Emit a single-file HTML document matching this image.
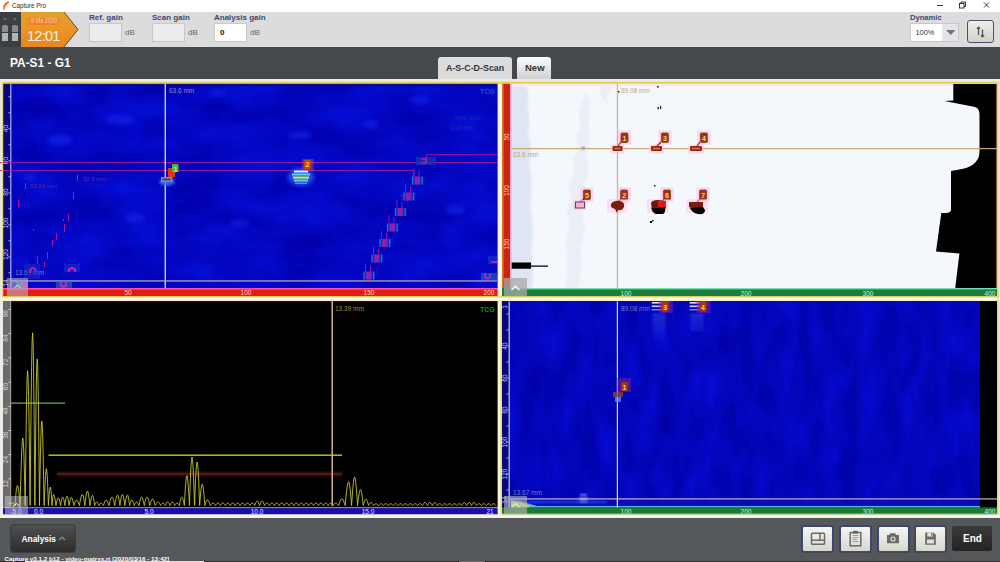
<!DOCTYPE html><html><head><meta charset="utf-8"><style>
*{margin:0;padding:0;box-sizing:border-box}
html,body{width:1000px;height:562px;overflow:hidden;background:#54585a;font-family:"Liberation Sans",sans-serif}
.a{position:absolute}
.lbl{font-size:8px;font-weight:bold;color:#3d4670;white-space:nowrap;line-height:10px}
.inp{background:#ececec;border:1px solid #c8c8c8}
.db{font-size:8px;color:#666;line-height:10px}
.bb{border:1.8px solid #3e4676;border-radius:2px;background:linear-gradient(#f6f6f2,#d6d8cc);box-shadow:0 0 0 1px rgba(40,40,60,.35)}
svg text{font-family:"Liberation Sans",sans-serif}
</style></head><body>
<div class="a" style="left:0;top:0;width:1000px;height:12px;background:#fff"></div>
<svg class="a" style="left:2px;top:1px" width="8" height="10" viewBox="0 0 8 10"><path d="M6.8 0.3 C3 1.2 0.8 4 1.2 8.6 L2.3 9.2 C2.6 6 4 3.6 7.4 1.6 Z" fill="#e8692a"/><path d="M2.2 8 C4 7 5.8 4.2 6.8 1.2" stroke="#f7b080" stroke-width="0.7" fill="none"/></svg>
<div class="a" style="left:12px;top:2px;font-size:6.3px;color:#2a2a2a;line-height:8px;white-space:nowrap">Capture Pro</div>
<svg class="a" style="left:930px;top:0" width="70" height="12" viewBox="0 0 70 12"><path d="M7 5.5 H13" stroke="#222" stroke-width="0.9"/><rect x="29.5" y="3.5" width="4.5" height="4.5" fill="none" stroke="#222" stroke-width="0.9"/><path d="M31 3.5 V2 H35.5 V6.5 H34" fill="none" stroke="#222" stroke-width="0.9"/><path d="M54 2.5 L59 7.5 M59 2.5 L54 7.5" stroke="#222" stroke-width="0.9"/></svg>
<div class="a" style="left:0;top:12px;width:1000px;height:35px;background:#dcdcdc"></div>
<div class="a" style="left:0;top:12px;width:21px;height:35px;background:#3c3f41"></div>
<div class="a" style="left:2px;top:25px;width:6px;height:16px;background:linear-gradient(#8c8c8c 0,#8c8c8c 44%,#3c3f41 44%,#3c3f41 50%,#b4b4b4 50%);border-radius:2px 2px 0 0"></div>
<div class="a" style="left:12px;top:25px;width:6px;height:16px;background:linear-gradient(#8c8c8c 0,#8c8c8c 44%,#3c3f41 44%,#3c3f41 50%,#b4b4b4 50%);border-radius:2px 2px 0 0"></div>
<svg class="a" style="left:0;top:12px" width="22" height="12"><path d="M3 6 L7 6 L5 9 Z M13 6 L17 6 L15 9 Z" fill="#6a6a6a"/></svg>
<svg class="a" style="left:21px;top:12px" width="58" height="35" viewBox="0 0 58 35"><defs><linearGradient id="og" x1="0" y1="0" x2="0" y2="1"><stop offset="0" stop-color="#dca22c"/><stop offset="0.3" stop-color="#ec9a28"/><stop offset="1" stop-color="#e8861e"/></linearGradient></defs><path d="M0 0 H43 L57 17.5 L43 35 H0 Z" fill="url(#og)"/><path d="M43 0 L57 17.5 L43 35" fill="none" stroke="#6a4a20" stroke-width="1"/></svg>
<div class="a" style="left:24px;top:17.5px;width:38px;height:7px;background:linear-gradient(90deg,rgba(240,110,40,0) 0,rgba(240,110,40,.55) 20%,rgba(240,110,40,.55) 80%,rgba(240,110,40,0) 100%)"></div>
<div class="a" style="left:30.5px;top:17px;font-size:6.6px;color:#ffd0a0;line-height:8px;white-space:nowrap;transform:scaleX(0.84);transform-origin:0 0">8 Ma 2020</div>
<div class="a" style="left:27px;top:28px;font-size:14.5px;color:#fff4e4;line-height:16px;white-space:nowrap;letter-spacing:-0.75px">12:01</div>
<div class="a lbl" style="left:89px;top:13px">Ref. gain</div>
<div class="a inp" style="left:89px;top:23px;width:33px;height:19px;background:#ececec"></div>
<div class="a db" style="left:125px;top:28px">dB</div>
<div class="a lbl" style="left:152px;top:13px">Scan gain</div>
<div class="a inp" style="left:152px;top:23px;width:33px;height:19px;background:#ececec"></div>
<div class="a db" style="left:188px;top:28px">dB</div>
<div class="a lbl" style="left:214px;top:13px">Analysis gain</div>
<div class="a inp" style="left:214px;top:23px;width:33px;height:19px;background:#fff"></div>
<div class="a db" style="left:250px;top:28px">dB</div>
<div class="a" style="left:220px;top:28px;font-size:8px;font-weight:bold;color:#111;line-height:10px">0</div>
<div class="a lbl" style="left:910px;top:13px;font-size:7.6px">Dynamic</div>
<div class="a inp" style="left:910px;top:23px;width:49px;height:19px;background:linear-gradient(90deg,#fff 0,#fff 67%,#e2e4e8 67%)"></div>
<div class="a" style="left:915.5px;top:28px;font-size:7.4px;color:#333;line-height:10px">100%</div>
<svg class="a" style="left:946px;top:30px" width="10" height="6"><path d="M0 0 H9.5 L4.75 5 Z" fill="#70757f"/></svg>
<div class="a" style="left:967px;top:20px;width:27px;height:23px;background:linear-gradient(#f0efec,#d2cfc8);border:1.6px solid #4a5070;border-radius:3px"></div>
<svg class="a" style="left:974px;top:24px" width="14" height="16" viewBox="0 0 14 16"><path d="M4.5 11 V3" stroke="#555" stroke-width="1.3" fill="none"/><path d="M2.3 5 L4.5 2 L6.7 5 Z" fill="#555"/><path d="M8.5 5.5 V13" stroke="#555" stroke-width="1.3" fill="none"/><path d="M6.3 11 L8.5 14 L10.7 11 Z" fill="#555"/></svg>
<div class="a" style="left:0;top:47px;width:1000px;height:32px;background:#46494b"></div>
<div class="a" style="left:10px;top:56.2px;font-size:11.9px;font-weight:bold;color:#fff;line-height:14px;white-space:nowrap">PA-S1 - G1</div>
<div class="a" style="left:438px;top:57px;width:74px;height:23px;background:#dcdcdc;border-radius:3px 3px 0 0"></div>
<div class="a" style="left:446px;top:63px;font-size:8.9px;font-weight:bold;color:#333;line-height:10px;white-space:nowrap">A-S-C-D-Scan</div>
<div class="a" style="left:517px;top:57px;width:34px;height:22px;background:linear-gradient(#fcfcfc,#d0d0d0);border-radius:3px 3px 0 0"></div>
<div class="a" style="left:525px;top:63px;font-size:9.5px;font-weight:bold;color:#333;line-height:10px;white-space:nowrap">New</div>
<div class="a" style="left:0;top:79px;width:1000px;height:3px;background:#ece8ea"></div>
<svg class="a" style="left:0;top:0" width="1000" height="562" viewBox="0 0 1000 562"><defs>
<filter id="nzB" x="0" y="0" width="100%" height="100%" color-interpolation-filters="sRGB"><feTurbulence type="fractalNoise" baseFrequency="0.018 0.04" numOctaves="3" seed="4"/><feColorMatrix values="0.03 0 0 0 -0.005  0.09 0 0 0 -0.02  0.24 0 0 0 0.635  0 0 0 0 1"/></filter>
<filter id="nzD" x="0" y="0" width="100%" height="100%" color-interpolation-filters="sRGB"><feTurbulence type="fractalNoise" baseFrequency="0.05 0.022" numOctaves="3" seed="9"/><feColorMatrix values="0.04 0 0 0 -0.01  0.06 0 0 0 -0.01  0.26 0 0 0 0.6  0 0 0 0 1"/></filter>
<filter id="bl05"><feGaussianBlur stdDeviation="0.6"/></filter>
<filter id="bl1"><feGaussianBlur stdDeviation="1"/></filter>
<filter id="bl2"><feGaussianBlur stdDeviation="2"/></filter>
</defs><rect x="0" y="82" width="1000" height="436" fill="#e6e4e2"/><rect x="2" y="82" width="997" height="436" fill="#f2ecc0"/><rect x="3" y="83.5" width="495" height="213" fill="#000ab8"/><rect x="11" y="84" width="486" height="204" filter="url(#nzB)"/><g filter="url(#bl2)" fill="#1828f0" opacity="0.55"><ellipse cx="217" cy="93" rx="9" ry="3"/><ellipse cx="370" cy="124" rx="8" ry="4"/><ellipse cx="30" cy="178" rx="6" ry="4"/><ellipse cx="135" cy="218" rx="10" ry="5"/><ellipse cx="240" cy="223" rx="10" ry="4"/><ellipse cx="120" cy="120" rx="14" ry="5"/><ellipse cx="300" cy="135" rx="12" ry="4"/><ellipse cx="455" cy="210" rx="10" ry="5"/><ellipse cx="60" cy="140" rx="12" ry="5"/><ellipse cx="420" cy="100" rx="10" ry="4"/></g><rect x="11" y="84" width="486" height="2.5" fill="#080890" opacity="0.8"/><rect x="3.5" y="84" width="7" height="204" fill="#08087a"/><rect x="10" y="84" width="1.5" height="204" fill="#8a8cf0"/><rect x="8.5" y="96.3" width="2" height="1" fill="#b0b4ff"/><rect x="8.5" y="112.3" width="2" height="1" fill="#b0b4ff"/><rect x="8.5" y="128.3" width="2" height="1" fill="#b0b4ff"/><rect x="8.5" y="144.3" width="2" height="1" fill="#b0b4ff"/><rect x="8.5" y="160.3" width="2" height="1" fill="#b0b4ff"/><rect x="8.5" y="176.3" width="2" height="1" fill="#b0b4ff"/><rect x="8.5" y="192.3" width="2" height="1" fill="#b0b4ff"/><rect x="8.5" y="208.3" width="2" height="1" fill="#b0b4ff"/><rect x="8.5" y="224.3" width="2" height="1" fill="#b0b4ff"/><rect x="8.5" y="240.3" width="2" height="1" fill="#b0b4ff"/><rect x="8.5" y="256.3" width="2" height="1" fill="#b0b4ff"/><rect x="8.5" y="272.3" width="2" height="1" fill="#b0b4ff"/><text x="8.3" y="128.6" font-size="6.5" fill="#c8c8f8" transform="rotate(-90 8.3 128.6)" text-anchor="middle">40</text><text x="8.3" y="160.5" font-size="6.5" fill="#c8c8f8" transform="rotate(-90 8.3 160.5)" text-anchor="middle">60</text><text x="8.3" y="192" font-size="6.5" fill="#c8c8f8" transform="rotate(-90 8.3 192)" text-anchor="middle">80</text><text x="8.3" y="223" font-size="6.5" fill="#c8c8f8" transform="rotate(-90 8.3 223)" text-anchor="middle">100</text><text x="8.3" y="254.5" font-size="6.5" fill="#c8c8f8" transform="rotate(-90 8.3 254.5)" text-anchor="middle">120</text><text x="8.3" y="283" font-size="6.5" fill="#c8c8f8" transform="rotate(-90 8.3 283)" text-anchor="middle">14</text><path d="M0 162.6 H497 M426.5 162.6 V154.7 H497 M0 170.6 H413.7 V178" stroke="#b41c94" stroke-width="0.9" fill="none"/><rect x="164.6" y="84" width="1.3" height="204" fill="#e4dcd0"/><rect x="11" y="280.3" width="486" height="1.3" fill="#a8a4c4"/><text x="169" y="92.5" font-size="6.5" fill="#8c8cc8" >63.6 mm</text><text x="15" y="275" font-size="6.5" fill="#8080b8" >13.67 mm</text><text x="480" y="93.5" font-size="7" fill="#2a4ea8" font-weight="bold">TCG</text><text x="83" y="181" font-size="6" fill="#6a20a8" >52.5 mm</text><text x="30" y="188" font-size="6" fill="#6a20a8" >53.04 mm</text><rect x="25" y="183" width="1" height="6" fill="#b01890"/><rect x="18" y="200" width="1" height="7" fill="#b01890"/><rect x="77" y="174" width="1" height="7" fill="#b01890"/><rect x="73" y="192" width="1" height="7" fill="#b01890"/><rect x="68" y="214" width="1" height="7" fill="#b01890"/><rect x="64" y="224" width="1" height="8" fill="#b01890"/><rect x="56" y="233" width="1" height="7" fill="#b01890"/><rect x="52" y="240" width="1" height="6" fill="#b01890"/><rect x="47" y="252" width="1" height="7" fill="#b01890"/><rect x="44" y="262" width="1" height="5" fill="#b01890"/><rect x="33" y="229" width="1" height="2" fill="#b01890"/><rect x="63" y="219" width="1" height="2" fill="#b01890"/><rect x="24" y="264" width="16" height="15" fill="#1838c0" opacity="0.45"/><rect x="64" y="264" width="16" height="8" fill="#1838c0" opacity="0.55"/><path d="M30.5 273 V269.5 Q33 266.5 35.5 269.5 V271" stroke="#e818b8" stroke-width="1.5" fill="none"/><path d="M69 272 V269.5 Q72 266.5 75 269.5 V272" stroke="#e818b8" stroke-width="1.8" fill="none"/><rect x="37" y="256" width="0.9" height="8" fill="#b01890"/><rect x="16" y="281.5" width="12" height="6.5" fill="#20a0a0" opacity="0.6"/><rect x="56" y="281.5" width="16" height="6.5" fill="#2090b0" opacity="0.5"/><path d="M22 282 V285.5 Q24 288 26.5 285.5 V282" stroke="#f020c0" stroke-width="1.8" fill="none"/><path d="M61 282 V285.5 Q63.5 288 66 285.5 V282" stroke="#d020c0" stroke-width="1.8" fill="none"/><rect x="411.5" y="176.5" width="12" height="8" fill="#1838c8" opacity="0.6"/><rect x="412.0" y="176.5" width="1.2" height="8" fill="#1890b0" opacity="0.8"/><rect x="421.5" y="176.5" width="1.2" height="8" fill="#1890b0" opacity="0.8"/><rect x="414.5" y="176.5" width="5.5" height="8" fill="#8a20b0"/><rect x="413.5" y="168.5" width="0.9" height="8" fill="#a01890"/><rect x="418.5" y="170.5" width="0.9" height="6" fill="#a01890"/><rect x="403" y="192.5" width="12" height="8" fill="#1838c8" opacity="0.6"/><rect x="403.5" y="192.5" width="1.2" height="8" fill="#1890b0" opacity="0.8"/><rect x="413" y="192.5" width="1.2" height="8" fill="#1890b0" opacity="0.8"/><rect x="406" y="192.5" width="5.5" height="8" fill="#8a20b0"/><rect x="405" y="184.5" width="0.9" height="8" fill="#a01890"/><rect x="410" y="186.5" width="0.9" height="6" fill="#a01890"/><rect x="394.5" y="208" width="12" height="8" fill="#1838c8" opacity="0.6"/><rect x="395.0" y="208" width="1.2" height="8" fill="#1890b0" opacity="0.8"/><rect x="404.5" y="208" width="1.2" height="8" fill="#1890b0" opacity="0.8"/><rect x="397.5" y="208" width="5.5" height="8" fill="#8a20b0"/><rect x="396.5" y="200" width="0.9" height="8" fill="#a01890"/><rect x="401.5" y="202" width="0.9" height="6" fill="#a01890"/><rect x="386.5" y="223.5" width="12" height="8" fill="#1838c8" opacity="0.6"/><rect x="387.0" y="223.5" width="1.2" height="8" fill="#1890b0" opacity="0.8"/><rect x="396.5" y="223.5" width="1.2" height="8" fill="#1890b0" opacity="0.8"/><rect x="389.5" y="223.5" width="5.5" height="8" fill="#8a20b0"/><rect x="388.5" y="215.5" width="0.9" height="8" fill="#a01890"/><rect x="393.5" y="217.5" width="0.9" height="6" fill="#a01890"/><rect x="379" y="239" width="12" height="8" fill="#1838c8" opacity="0.6"/><rect x="379.5" y="239" width="1.2" height="8" fill="#1890b0" opacity="0.8"/><rect x="389" y="239" width="1.2" height="8" fill="#1890b0" opacity="0.8"/><rect x="382" y="239" width="5.5" height="8" fill="#8a20b0"/><rect x="381" y="231" width="0.9" height="8" fill="#a01890"/><rect x="386" y="233" width="0.9" height="6" fill="#a01890"/><rect x="371" y="254.5" width="12" height="8" fill="#1838c8" opacity="0.6"/><rect x="371.5" y="254.5" width="1.2" height="8" fill="#1890b0" opacity="0.8"/><rect x="381" y="254.5" width="1.2" height="8" fill="#1890b0" opacity="0.8"/><rect x="374" y="254.5" width="5.5" height="8" fill="#8a20b0"/><rect x="373" y="246.5" width="0.9" height="8" fill="#a01890"/><rect x="378" y="248.5" width="0.9" height="6" fill="#a01890"/><rect x="363" y="271.5" width="12" height="8" fill="#1838c8" opacity="0.6"/><rect x="363.5" y="271.5" width="1.2" height="8" fill="#1890b0" opacity="0.8"/><rect x="373" y="271.5" width="1.2" height="8" fill="#1890b0" opacity="0.8"/><rect x="366" y="271.5" width="5.5" height="8" fill="#8a20b0"/><rect x="365" y="263.5" width="0.9" height="8" fill="#a01890"/><rect x="370" y="265.5" width="0.9" height="6" fill="#a01890"/><rect x="488" y="256" width="9" height="8" fill="#1838c8" opacity="0.6"/><path d="M491 262 H497" stroke="#e020b0" stroke-width="1.5"/><rect x="481" y="273" width="16" height="7" fill="#2090b0" opacity="0.45"/><path d="M485 273.5 V277 Q487.5 279.5 490 277 V273.5" stroke="#d020c0" stroke-width="1.6" fill="none"/><rect x="416" y="157" width="20" height="8" fill="#1838b0" opacity="0.7"/><path d="M421 159 h5 v4 h-5" stroke="#e02090" stroke-width="1.2" fill="none"/><text x="400" y="200" font-size="6.5" fill="#6a2090" >TCG</text><text x="455" y="120" font-size="6" fill="#1830b0" >NNA 50/2</text><text x="450" y="130" font-size="6" fill="#1830b0" >SCP 500 </text><g filter="url(#bl2)"><ellipse cx="301" cy="177" rx="13" ry="9" fill="#2a60ff" opacity="0.8"/></g><g filter="url(#bl05)"><rect x="294" y="170.5" width="14" height="2" fill="#d8e8ff"/><rect x="292" y="173.5" width="18" height="2" fill="#50d8ff"/><rect x="293" y="176.5" width="16" height="2.2" fill="#b8f040"/><rect x="294" y="179.5" width="14" height="2" fill="#70c0ff"/><rect x="295" y="182.5" width="12" height="1.5" fill="#3090ff"/></g><rect x="302" y="159" width="12" height="12" fill="#ff40c0" opacity="0.3"/><rect x="304" y="160" width="7" height="9" rx="1" fill="#d04010" stroke="#806010" stroke-width="0.6"/><text x="307.5" y="167" font-size="7" font-weight="bold" fill="#ffd040" text-anchor="middle">2</text><g filter="url(#bl1)"><ellipse cx="167" cy="182" rx="8" ry="4" fill="#3a70ff" opacity="0.8"/></g><g filter="url(#bl05)"><rect x="168" y="168" width="7" height="9" fill="#e03418"/><rect x="172" y="164" width="6.5" height="8" rx="1" fill="#48b840"/></g><text x="175.5" y="172" font-size="7" font-weight="bold" fill="#ffe040" text-anchor="middle">1</text><rect x="161" y="177" width="11.5" height="5" fill="#8a8a9a"/><rect x="162.5" y="178.5" width="8" height="2" fill="#404060"/><rect x="3" y="288" width="495" height="8" fill="#e41e0c"/><rect x="3" y="288" width="495" height="1.6" fill="#ff48b0"/><text x="128" y="295" font-size="6.5" fill="#ffd8c8" text-anchor="middle">50</text><text x="246" y="295" font-size="6.5" fill="#ffd8c8" text-anchor="middle">100</text><text x="369" y="295" font-size="6.5" fill="#ffd8c8" text-anchor="middle">150</text><text x="489" y="295" font-size="6.5" fill="#ffd8c8" text-anchor="middle">200</text><rect x="7" y="278" width="21" height="18" fill="#b8b0c0" opacity="0.6"/><path d="M14.5 288 L17.5 285 L20.5 288" stroke="#e0f0ff" stroke-width="1" fill="none"/><rect x="502" y="83.5" width="495" height="213" fill="#f4f7fc"/><g filter="url(#bl1)"><path d="M511 86 H526 Q530 96 527 108 Q531 120 528 132 Q533 150 529 165 Q534 185 530 205 Q535 230 531 250 Q534 270 532 288 H511 Z" fill="#dde6f2"/><path d="M586 92 Q582 104 578 112 Q584 124 576 136 Q582 150 572 160 Q578 172 568 186 Q574 198 566 210 Q572 226 566 244 Q570 262 566 288 H578 Q584 266 580 248 Q588 230 582 214 Q590 198 584 184 Q592 170 586 156 Q592 140 588 124 Q594 108 586 92 Z" fill="#eaeef5"/><path d="M600 86 H612 Q606 94 608 104 Q602 100 600 92 Z" fill="#eaeef5"/></g><rect x="511" y="83.5" width="486" height="2.8" fill="#fbe6f2"/><path d="M953.3 84 H996 V288 H955.2 L959.4 253.6 L936 251.4 L941.3 213 H947 Q951 212 951 209.9 V171 L962 169 Q979.5 165 979.5 151.4 V115 Q979.5 108 975 107 L944.5 101 L953.3 100.5 Z" fill="#000"/><rect x="995.5" y="84" width="1.2" height="204" fill="#401010"/><rect x="511" y="148" width="486" height="1.2" fill="#c8a870"/><rect x="616.8" y="84" width="1.3" height="204" fill="#d0b888"/><text x="621" y="92.5" font-size="6.5" fill="#c0a488" >89.08 mm</text><text x="513" y="157" font-size="6.5" fill="#c0a488" >63.6 mm</text><path d="M511.5 262.5 H531 V265.6 H548 V266.8 H531 V268.8 H511.5 Z" fill="#000"/><rect x="510" y="262.5" width="2" height="6.5" fill="#901010"/><rect x="618" y="91" width="1.5" height="1.5" fill="#202020"/><rect x="657" y="86" width="1.6" height="1.6" fill="#202020"/><rect x="657.5" y="107" width="1.4" height="2.2" fill="#202020"/><rect x="660" y="106" width="1.2" height="3" fill="#202020"/><rect x="652" y="220" width="1.5" height="1.5" fill="#202020"/><rect x="654" y="185" width="1.5" height="1.5" fill="#202020"/><rect x="581.5" y="146.5" width="3.5" height="3.5" fill="#a8b0c0"/><rect x="618" y="130.5" width="13" height="14" fill="#ffc4ec" opacity="0.75"/><rect x="621" y="133" width="7" height="9.5" rx="1.2" fill="#a83010" stroke="#5a4010" stroke-width="0.7"/><text x="624.5" y="140.5" font-size="7" font-weight="bold" fill="#f8d860" text-anchor="middle">1</text><rect x="658.4" y="130.5" width="13" height="14" fill="#ffc4ec" opacity="0.75"/><rect x="661.4" y="133" width="7" height="9.5" rx="1.2" fill="#a83010" stroke="#5a4010" stroke-width="0.7"/><text x="664.9" y="140.5" font-size="7" font-weight="bold" fill="#f8d860" text-anchor="middle">3</text><rect x="697.4" y="130.5" width="13" height="14" fill="#ffc4ec" opacity="0.75"/><rect x="700.4" y="133" width="7" height="9.5" rx="1.2" fill="#a83010" stroke="#5a4010" stroke-width="0.7"/><text x="703.9" y="140.5" font-size="7" font-weight="bold" fill="#f8d860" text-anchor="middle">4</text><rect x="580.4" y="187.5" width="13" height="14" fill="#ffc4ec" opacity="0.75"/><rect x="583.4" y="190" width="7" height="9.5" rx="1.2" fill="#a83010" stroke="#5a4010" stroke-width="0.7"/><text x="586.9" y="197.5" font-size="7" font-weight="bold" fill="#f8d860" text-anchor="middle">5</text><rect x="617.6" y="187.5" width="13" height="14" fill="#ffc4ec" opacity="0.75"/><rect x="620.6" y="190" width="7" height="9.5" rx="1.2" fill="#a83010" stroke="#5a4010" stroke-width="0.7"/><text x="624.1" y="197.5" font-size="7" font-weight="bold" fill="#f8d860" text-anchor="middle">2</text><rect x="660.5" y="187.5" width="13" height="14" fill="#ffc4ec" opacity="0.75"/><rect x="663.5" y="190" width="7" height="9.5" rx="1.2" fill="#a83010" stroke="#5a4010" stroke-width="0.7"/><text x="667.0" y="197.5" font-size="7" font-weight="bold" fill="#f8d860" text-anchor="middle">6</text><rect x="696.6" y="187.5" width="13" height="14" fill="#ffc4ec" opacity="0.75"/><rect x="699.6" y="190" width="7" height="9.5" rx="1.2" fill="#a83010" stroke="#5a4010" stroke-width="0.7"/><text x="703.1" y="197.5" font-size="7" font-weight="bold" fill="#f8d860" text-anchor="middle">7</text><rect x="610.5" y="144.5" width="14" height="9" fill="#ffc4ec" opacity="0.6"/><rect x="612.5" y="146" width="10" height="5" rx="1" fill="#9a2a0c"/><rect x="614.5" y="147.8" width="6" height="1.4" fill="#e0a080" opacity="0.7"/><rect x="649" y="144.5" width="15" height="9" fill="#ffc4ec" opacity="0.6"/><rect x="651" y="146" width="11" height="5" rx="1" fill="#9a2a0c"/><rect x="653" y="147.8" width="7" height="1.4" fill="#e0a080" opacity="0.7"/><rect x="688" y="144.5" width="16" height="9" fill="#ffc4ec" opacity="0.6"/><rect x="690" y="146" width="12" height="5" rx="1" fill="#9a2a0c"/><rect x="692" y="147.8" width="8" height="1.4" fill="#e0a080" opacity="0.7"/><path d="M621 142 L618 146" stroke="#a02010" stroke-width="1.2"/><path d="M661 142 L657 146" stroke="#a02010" stroke-width="1.2"/><path d="M700 142 L697 146" stroke="#a02010" stroke-width="1.2"/><path d="M584 199 L580 202" stroke="#a02010" stroke-width="1.2"/><path d="M621 199 L618 202" stroke="#a02010" stroke-width="1.2"/><path d="M664 199 L661 202" stroke="#a02010" stroke-width="1.2"/><path d="M700 199 L697 202" stroke="#a02010" stroke-width="1.2"/><rect x="573" y="200" width="13" height="10" fill="#ffc4ec" opacity="0.6"/><rect x="575.5" y="202" width="9" height="6" fill="#f4b0d8" stroke="#603040" stroke-width="0.9"/><rect x="607" y="199" width="20" height="14" fill="#ffc4ec" opacity="0.45"/><rect x="647" y="199" width="22" height="14" fill="#ffc4ec" opacity="0.45"/><rect x="686" y="199" width="22" height="14" fill="#ffc4ec" opacity="0.45"/><path d="M611 204 Q614 200 620 201 Q625 202 624 207 Q622 211 618 210 L617 213 L615 209 Q610 208 611 204 Z" fill="#7a1c10"/><path d="M651 203 Q652 200 658 200 L666 201 L666 208 Q664 211 660 210 L662 214 L655 214 L652 211 Z" fill="#6a1a10"/><rect x="658" y="201" width="8" height="6" fill="#e01818"/><path d="M651 208 Q654 212 656 214 L663 214 Q666 212 665 208 Z" fill="#000"/><path d="M689 202 H703 V208 Q699 210 693 209 L689 207 Z" fill="#7a1c10"/><path d="M690 208 Q692 213 698 214 Q705 215 705 210 L703 207 Z" fill="#000"/><rect x="650" y="221" width="2" height="2" fill="#000"/><rect x="502" y="83.5" width="2" height="213" fill="#f0c070"/><rect x="501.7" y="83.5" width="2" height="205" fill="#d07830"/><rect x="503.5" y="83.5" width="6.6" height="205" fill="#cc2410"/><rect x="510" y="83.5" width="1.6" height="205" fill="#f8a8d8"/><text x="508.7" y="137" font-size="6.5" fill="#ffd8c0" transform="rotate(-90 508.7 137)" text-anchor="middle">50</text><text x="508.7" y="190.5" font-size="6.5" fill="#ffd8c0" transform="rotate(-90 508.7 190.5)" text-anchor="middle">100</text><text x="508.7" y="244" font-size="6.5" fill="#ffd8c0" transform="rotate(-90 508.7 244)" text-anchor="middle">150</text><rect x="502" y="288" width="495" height="8.5" fill="#1c7c3c"/><rect x="511" y="288" width="486" height="1.4" fill="#70e0b0"/><text x="626" y="295.5" font-size="6.5" fill="#d8f0d8" text-anchor="middle">100</text><text x="746" y="295.5" font-size="6.5" fill="#d8f0d8" text-anchor="middle">200</text><text x="868" y="295.5" font-size="6.5" fill="#d8f0d8" text-anchor="middle">300</text><text x="990" y="295.5" font-size="6.5" fill="#d8f0d8" text-anchor="middle">400</text><rect x="504" y="278" width="23" height="18" fill="#a8a8a8" opacity="0.75"/><path d="M511.5 290 L515.5 286 L519.5 290" stroke="#fff" stroke-width="1.2" fill="none"/><rect x="3" y="301" width="495" height="213" fill="#000"/><rect x="11" y="301" width="487" height="1.5" fill="#300808"/><rect x="3" y="301" width="8" height="213" fill="#6c6c6c"/><rect x="0" y="301" width="3" height="214" fill="#ecebe8"/><rect x="10" y="301" width="1.2" height="205" fill="#9a9a9a"/><rect x="8.5" y="309.0" width="2.5" height="0.9" fill="#e0e0e0"/><rect x="8.5" y="333.2" width="2.5" height="0.9" fill="#e0e0e0"/><rect x="8.5" y="357.4" width="2.5" height="0.9" fill="#e0e0e0"/><rect x="8.5" y="381.6" width="2.5" height="0.9" fill="#e0e0e0"/><rect x="8.5" y="405.8" width="2.5" height="0.9" fill="#e0e0e0"/><rect x="8.5" y="430.0" width="2.5" height="0.9" fill="#e0e0e0"/><rect x="8.5" y="454.2" width="2.5" height="0.9" fill="#e0e0e0"/><rect x="8.5" y="478.4" width="2.5" height="0.9" fill="#e0e0e0"/><rect x="8.5" y="502.6" width="2.5" height="0.9" fill="#e0e0e0"/><text x="8" y="313.7" font-size="6.5" fill="#d8d8d8" transform="rotate(-90 8 313.7)" text-anchor="middle">96</text><text x="8" y="338" font-size="6.5" fill="#d8d8d8" transform="rotate(-90 8 338)" text-anchor="middle">84</text><text x="8" y="362.3" font-size="6.5" fill="#d8d8d8" transform="rotate(-90 8 362.3)" text-anchor="middle">72</text><text x="8" y="386.6" font-size="6.5" fill="#d8d8d8" transform="rotate(-90 8 386.6)" text-anchor="middle">60</text><text x="8" y="410.9" font-size="6.5" fill="#d8d8d8" transform="rotate(-90 8 410.9)" text-anchor="middle">48</text><text x="8" y="435.2" font-size="6.5" fill="#d8d8d8" transform="rotate(-90 8 435.2)" text-anchor="middle">36</text><text x="8" y="459.5" font-size="6.5" fill="#d8d8d8" transform="rotate(-90 8 459.5)" text-anchor="middle">24</text><text x="8" y="483.8" font-size="6.5" fill="#d8d8d8" transform="rotate(-90 8 483.8)" text-anchor="middle">12</text><rect x="11" y="402.5" width="54" height="1.2" fill="#60c048"/><rect x="48.5" y="454.5" width="293.5" height="1.4" fill="#c8c818"/><rect x="57" y="471.5" width="285" height="5" fill="#401008" opacity="0.8" filter="url(#bl1)"/><rect x="57" y="473.3" width="285" height="1.2" fill="#6c2414"/><rect x="331.5" y="301" width="1.4" height="205" fill="#e0c098"/><text x="335" y="311" font-size="6.5" fill="#a88840" >13.39 mm</text><text x="480" y="311.5" font-size="7" fill="#208a20" font-weight="bold">TCG</text><polyline points="10.00,505.50 10.50,504.73 11.00,504.03 11.50,503.48 12.00,503.12 12.50,503.00 12.99,503.12 13.48,503.48 13.97,504.03 14.46,504.73 14.95,505.50 14.95,505.50 15.44,499.32 15.93,493.74 16.42,489.32 16.91,486.48 17.40,485.50 17.94,486.48 18.48,489.32 19.02,493.74 19.56,499.32 20.10,505.50 20.10,505.50 20.64,484.64 21.18,465.82 21.72,450.89 22.26,441.30 22.80,438.00 23.28,441.30 23.76,450.89 24.24,465.82 24.72,484.64 25.20,505.50 25.20,505.50 25.68,463.84 26.16,426.27 26.64,396.44 27.12,377.30 27.60,370.70 28.10,377.30 28.60,396.44 29.10,426.27 29.60,463.84 30.10,505.50 30.10,505.50 30.60,452.13 31.10,403.99 31.60,365.78 32.10,341.25 32.60,332.80 33.06,341.25 33.52,365.78 33.98,403.99 34.44,452.13 34.90,505.50 34.90,505.50 35.36,460.20 35.82,419.33 36.28,386.90 36.74,366.08 37.20,358.90 37.66,366.08 38.12,386.90 38.58,419.33 39.04,460.20 39.50,505.50 39.50,505.50 39.96,479.39 40.42,455.83 40.88,437.14 41.34,425.14 41.80,421.00 42.26,425.14 42.72,437.14 43.18,455.83 43.64,479.39 44.10,505.50 44.10,505.50 44.56,494.10 45.02,483.81 45.48,475.65 45.94,470.41 46.40,468.60 46.80,470.41 47.20,475.65 47.60,483.81 48.00,494.10 48.40,505.50 48.40,505.50 48.80,499.78 49.20,494.63 49.60,490.53 50.00,487.91 50.40,487.00 50.72,487.91 51.04,490.53 51.36,494.63 51.68,499.78 52.00,505.50 52.00,505.50 52.32,502.07 52.64,498.98 52.96,496.52 53.28,494.94 53.60,494.40 54.07,494.94 54.54,496.52 55.01,498.98 55.48,502.07 55.95,505.50 55.95,505.50 56.42,503.12 56.89,500.97 57.36,499.27 57.83,498.18 58.30,497.80 58.75,498.18 59.20,499.27 59.65,500.97 60.10,503.12 60.55,505.50 60.55,505.50 61.00,502.87 61.45,500.50 61.90,498.62 62.35,497.42 62.80,497.00 63.22,497.42 63.64,498.62 64.06,500.50 64.48,502.87 64.90,505.50 64.90,505.50 65.32,502.56 65.74,499.92 66.16,497.81 66.58,496.46 67.00,496.00 67.43,496.46 67.86,497.81 68.29,499.92 68.72,502.56 69.15,505.50 69.15,505.50 69.58,503.03 70.01,500.80 70.44,499.03 70.87,497.89 71.30,497.50 71.82,497.89 72.34,499.03 72.86,500.80 73.38,503.03 73.90,505.50 73.90,505.50 74.42,503.80 74.94,502.27 75.46,501.05 75.98,500.27 76.50,500.00 77.08,500.27 77.66,501.05 78.24,502.27 78.82,503.80 79.40,505.50 79.40,505.50 79.98,502.07 80.56,498.98 81.14,496.52 81.72,494.94 82.30,494.40 82.81,494.94 83.32,496.52 83.83,498.98 84.34,502.07 84.85,505.50 84.85,505.50 85.36,501.02 85.87,496.98 86.38,493.77 86.89,491.71 87.40,491.00 87.91,491.71 88.42,493.77 88.93,496.98 89.44,501.02 89.95,505.50 89.95,505.50 90.46,502.35 90.97,499.50 91.48,497.25 91.99,495.80 92.50,495.30 92.93,495.80 93.36,497.25 93.79,499.50 94.22,502.35 94.65,505.50 94.65,505.50 95.08,504.42 95.51,503.44 95.94,502.67 96.37,502.17 96.80,502.00 97.22,502.17 97.64,502.67 98.06,503.44 98.48,504.42 98.90,505.50 98.90,505.50 99.32,504.73 99.74,504.03 100.16,503.48 100.58,503.12 101.00,503.00 101.50,503.12 102.00,503.48 102.50,504.03 103.00,504.73 103.50,505.50 103.50,505.50 104.00,503.80 104.50,502.27 105.00,501.05 105.50,500.27 106.00,500.00 106.60,500.27 107.20,501.05 107.80,502.27 108.40,503.80 109.00,505.50 109.00,505.50 109.60,502.87 110.20,500.50 110.80,498.62 111.40,497.42 112.00,497.00 112.55,497.42 113.10,498.62 113.65,500.50 114.20,502.87 114.75,505.50 114.75,505.50 115.30,502.26 115.85,499.33 116.40,497.01 116.95,495.51 117.50,495.00 117.98,495.51 118.46,497.01 118.94,499.33 119.42,502.26 119.90,505.50 119.90,505.50 120.38,502.07 120.86,498.98 121.34,496.52 121.82,494.94 122.30,494.40 122.81,494.94 123.32,496.52 123.83,498.98 124.34,502.07 124.85,505.50 124.85,505.50 125.36,502.26 125.87,499.33 126.38,497.01 126.89,495.51 127.40,495.00 127.84,495.51 128.28,497.01 128.72,499.33 129.16,502.26 129.60,505.50 129.60,505.50 130.04,503.80 130.48,502.27 130.92,501.05 131.36,500.27 131.80,500.00 132.27,500.27 132.74,501.05 133.21,502.27 133.68,503.80 134.15,505.50 134.15,505.50 134.62,504.42 135.09,503.44 135.56,502.67 136.03,502.17 136.50,502.00 137.00,502.17 137.50,502.67 138.00,503.44 138.50,504.42 139.00,505.50 139.00,505.50 139.50,502.87 140.00,500.50 140.50,498.62 141.00,497.42 141.50,497.00 142.05,497.42 142.60,498.62 143.15,500.50 143.70,502.87 144.25,505.50 144.25,505.50 144.80,502.87 145.35,500.50 145.90,498.62 146.45,497.42 147.00,497.00 147.55,497.42 148.10,498.62 148.65,500.50 149.20,502.87 149.75,505.50 149.75,505.50 150.30,503.49 150.85,501.68 151.40,500.24 151.95,499.32 152.50,499.00 153.05,499.32 153.60,500.24 154.15,501.68 154.70,503.49 155.25,505.50 155.25,505.50 155.80,504.42 156.35,503.44 156.90,502.67 157.45,502.17 158.00,502.00 158.50,502.17 159.00,502.67 159.50,503.44 160.00,504.42 160.50,505.50 160.50,505.50 161.00,504.73 161.50,504.03 162.00,503.48 162.50,503.12 163.00,503.00 163.45,503.12 163.90,503.48 164.35,504.03 164.80,504.73 165.25,505.50 165.25,505.50 165.70,504.42 166.15,503.44 166.60,502.67 167.05,502.17 167.50,502.00 167.99,502.17 168.48,502.67 168.97,503.44 169.46,504.42 169.95,505.50 169.95,505.50 170.44,504.42 170.93,503.44 171.42,502.67 171.91,502.17 172.40,502.00 172.86,502.17 173.32,502.67 173.78,503.44 174.24,504.42 174.70,505.50 174.70,505.50 175.16,504.73 175.62,504.03 176.08,503.48 176.54,503.12 177.00,503.00 177.48,503.12 177.96,503.48 178.44,504.03 178.92,504.73 179.40,505.50 179.40,505.50 179.88,502.87 180.36,500.50 180.84,498.62 181.32,497.42 181.80,497.00 182.31,497.42 182.82,498.62 183.33,500.50 183.84,502.87 184.35,505.50 184.35,505.50 184.86,496.29 185.37,487.98 185.88,481.39 186.39,477.16 186.90,475.70 187.41,477.16 187.92,481.39 188.43,487.98 188.94,496.29 189.45,505.50 189.45,505.50 189.96,490.51 190.47,476.99 190.98,466.26 191.49,459.37 192.00,457.00 192.51,459.37 193.02,466.26 193.53,476.99 194.04,490.51 194.55,505.50 194.55,505.50 195.06,492.06 195.57,479.93 196.08,470.31 196.59,464.13 197.10,462.00 197.61,464.13 198.12,470.31 198.63,479.93 199.14,492.06 199.65,505.50 199.65,505.50 200.16,498.92 200.67,492.98 201.18,488.27 201.69,485.24 202.20,484.20 202.73,485.24 203.26,488.27 203.79,492.98 204.32,498.92 204.85,505.50 204.85,505.50 205.38,503.80 205.91,502.27 206.44,501.05 206.97,500.27 207.50,500.00 208.05,500.27 208.60,501.05 209.15,502.27 209.70,503.80 210.25,505.50 210.25,505.50 210.80,504.73 211.35,504.03 211.90,503.48 212.45,503.12 213.00,503.00 213.50,503.12 214.00,503.48 214.50,504.03 215.00,504.73 215.50,505.50 215.50,505.50 216.00,504.73 216.50,504.03 217.00,503.48 217.50,503.12 218.00,503.00 218.49,503.12 218.98,503.48 219.47,504.03 219.96,504.73 220.45,505.50 220.45,505.50 220.94,504.73 221.43,504.03 221.92,503.48 222.41,503.12 222.90,503.00 223.39,503.12 223.88,503.48 224.37,504.03 224.86,504.73 225.35,505.50 225.35,505.50 225.84,504.73 226.33,504.03 226.82,503.48 227.31,503.12 227.80,503.00 228.29,503.12 228.78,503.48 229.27,504.03 229.76,504.73 230.25,505.50 230.25,505.50 230.74,504.73 231.23,504.03 231.72,503.48 232.21,503.12 232.70,503.00 233.19,503.12 233.68,503.48 234.17,504.03 234.66,504.73 235.15,505.50 235.15,505.50 235.64,504.73 236.13,504.03 236.62,503.48 237.11,503.12 237.60,503.00 238.09,503.12 238.58,503.48 239.07,504.03 239.56,504.73 240.05,505.50 240.05,505.50 240.54,504.73 241.03,504.03 241.52,503.48 242.01,503.12 242.50,503.00 242.99,503.12 243.48,503.48 243.97,504.03 244.46,504.73 244.95,505.50 244.95,505.50 245.44,504.73 245.93,504.03 246.42,503.48 246.91,503.12 247.40,503.00 247.89,503.12 248.38,503.48 248.87,504.03 249.36,504.73 249.85,505.50 249.85,505.50 250.34,504.73 250.83,504.03 251.32,503.48 251.81,503.12 252.30,503.00 252.79,503.12 253.28,503.48 253.77,504.03 254.26,504.73 254.75,505.50 254.75,505.50 255.24,504.11 255.73,502.85 256.22,501.86 256.71,501.22 257.20,501.00 257.69,501.22 258.18,501.86 258.67,502.85 259.16,504.11 259.65,505.50 259.65,505.50 260.14,504.11 260.63,502.85 261.12,501.86 261.61,501.22 262.10,501.00 262.59,501.22 263.08,501.86 263.57,502.85 264.06,504.11 264.55,505.50 264.55,505.50 265.04,504.73 265.53,504.03 266.02,503.48 266.51,503.12 267.00,503.00 267.49,503.12 267.98,503.48 268.47,504.03 268.96,504.73 269.45,505.50 269.45,505.50 269.94,504.73 270.43,504.03 270.92,503.48 271.41,503.12 271.90,503.00 272.39,503.12 272.88,503.48 273.37,504.03 273.86,504.73 274.35,505.50 274.35,505.50 274.84,504.73 275.33,504.03 275.82,503.48 276.31,503.12 276.80,503.00 277.29,503.12 277.78,503.48 278.27,504.03 278.76,504.73 279.25,505.50 279.25,505.50 279.74,504.73 280.23,504.03 280.72,503.48 281.21,503.12 281.70,503.00 282.19,503.12 282.68,503.48 283.17,504.03 283.66,504.73 284.15,505.50 284.15,505.50 284.64,504.73 285.13,504.03 285.62,503.48 286.11,503.12 286.60,503.00 287.09,503.12 287.58,503.48 288.07,504.03 288.56,504.73 289.05,505.50 289.05,505.50 289.54,504.73 290.03,504.03 290.52,503.48 291.01,503.12 291.50,503.00 291.99,503.12 292.48,503.48 292.97,504.03 293.46,504.73 293.95,505.50 293.95,505.50 294.44,504.73 294.93,504.03 295.42,503.48 295.91,503.12 296.40,503.00 296.89,503.12 297.38,503.48 297.87,504.03 298.36,504.73 298.85,505.50 298.85,505.50 299.34,504.73 299.83,504.03 300.32,503.48 300.81,503.12 301.30,503.00 301.79,503.12 302.28,503.48 302.77,504.03 303.26,504.73 303.75,505.50 303.75,505.50 304.24,504.73 304.73,504.03 305.22,503.48 305.71,503.12 306.20,503.00 306.69,503.12 307.18,503.48 307.67,504.03 308.16,504.73 308.65,505.50 308.65,505.50 309.14,504.73 309.63,504.03 310.12,503.48 310.61,503.12 311.10,503.00 311.59,503.12 312.08,503.48 312.57,504.03 313.06,504.73 313.55,505.50 313.55,505.50 314.04,504.73 314.53,504.03 315.02,503.48 315.51,503.12 316.00,503.00 316.49,503.12 316.98,503.48 317.47,504.03 317.96,504.73 318.45,505.50 318.45,505.50 318.94,504.73 319.43,504.03 319.92,503.48 320.41,503.12 320.90,503.00 321.39,503.12 321.88,503.48 322.37,504.03 322.86,504.73 323.35,505.50 323.35,505.50 323.84,504.73 324.33,504.03 324.82,503.48 325.31,503.12 325.80,503.00 326.29,503.12 326.78,503.48 327.27,504.03 327.76,504.73 328.25,505.50 328.25,505.50 328.74,504.73 329.23,504.03 329.72,503.48 330.21,503.12 330.70,503.00 331.19,503.12 331.68,503.48 332.17,504.03 332.66,504.73 333.15,505.50 333.15,505.50 333.64,504.73 334.13,504.03 334.62,503.48 335.11,503.12 335.60,503.00 336.22,503.12 336.84,503.48 337.46,504.03 338.08,504.73 338.70,505.50 338.70,505.50 339.32,503.40 339.94,501.50 340.56,500.00 341.18,499.03 341.80,498.70 342.48,499.03 343.16,500.00 343.84,501.50 344.52,503.40 345.20,505.50 345.20,505.50 345.88,498.15 346.56,491.51 347.24,486.25 347.92,482.86 348.60,481.70 349.20,482.86 349.80,486.25 350.40,491.51 351.00,498.15 351.60,505.50 351.60,505.50 352.20,496.69 352.80,488.75 353.40,482.44 354.00,478.39 354.60,477.00 355.19,478.39 355.78,482.44 356.37,488.75 356.96,496.69 357.55,505.50 357.55,505.50 358.14,500.62 358.73,496.21 359.32,492.72 359.91,490.47 360.50,489.70 361.05,490.47 361.60,492.72 362.15,496.21 362.70,500.62 363.25,505.50 363.25,505.50 363.80,503.49 364.35,501.68 364.90,500.24 365.45,499.32 366.00,499.00 366.50,499.32 367.00,500.24 367.50,501.68 368.00,503.49 368.50,505.50 368.50,505.50 369.00,504.57 369.50,503.74 370.00,503.07 370.50,502.65 371.00,502.50 371.50,502.65 372.00,503.07 372.50,503.74 373.00,504.57 373.50,505.50 373.50,505.50 374.00,504.94 374.50,504.44 375.00,504.04 375.50,503.79 376.00,503.70 376.49,503.79 376.98,504.04 377.47,504.44 377.96,504.94 378.45,505.50 378.45,505.50 378.94,504.94 379.43,504.44 379.92,504.04 380.41,503.79 380.90,503.70 381.39,503.79 381.88,504.04 382.37,504.44 382.86,504.94 383.35,505.50 383.35,505.50 383.84,504.94 384.33,504.44 384.82,504.04 385.31,503.79 385.80,503.70 386.29,503.79 386.78,504.04 387.27,504.44 387.76,504.94 388.25,505.50 388.25,505.50 388.74,504.94 389.23,504.44 389.72,504.04 390.21,503.79 390.70,503.70 391.19,503.79 391.68,504.04 392.17,504.44 392.66,504.94 393.15,505.50 393.15,505.50 393.64,504.94 394.13,504.44 394.62,504.04 395.11,503.79 395.60,503.70 396.09,503.79 396.58,504.04 397.07,504.44 397.56,504.94 398.05,505.50 398.05,505.50 398.54,504.94 399.03,504.44 399.52,504.04 400.01,503.79 400.50,503.70 400.99,503.79 401.48,504.04 401.97,504.44 402.46,504.94 402.95,505.50 402.95,505.50 403.44,504.94 403.93,504.44 404.42,504.04 404.91,503.79 405.40,503.70 405.89,503.79 406.38,504.04 406.87,504.44 407.36,504.94 407.85,505.50 407.85,505.50 408.34,504.94 408.83,504.44 409.32,504.04 409.81,503.79 410.30,503.70 410.79,503.79 411.28,504.04 411.77,504.44 412.26,504.94 412.75,505.50 412.75,505.50 413.24,504.94 413.73,504.44 414.22,504.04 414.71,503.79 415.20,503.70 415.69,503.79 416.18,504.04 416.67,504.44 417.16,504.94 417.65,505.50 417.65,505.50 418.14,504.94 418.63,504.44 419.12,504.04 419.61,503.79 420.10,503.70 420.59,503.79 421.08,504.04 421.57,504.44 422.06,504.94 422.55,505.50 422.55,505.50 423.04,504.57 423.53,503.74 424.02,503.07 424.51,502.65 425.00,502.50 425.49,502.65 425.98,503.07 426.47,503.74 426.96,504.57 427.45,505.50 427.45,505.50 427.94,504.57 428.43,503.74 428.92,503.07 429.41,502.65 429.90,502.50 430.39,502.65 430.88,503.07 431.37,503.74 431.86,504.57 432.35,505.50 432.35,505.50 432.84,504.57 433.33,503.74 433.82,503.07 434.31,502.65 434.80,502.50 435.29,502.65 435.78,503.07 436.27,503.74 436.76,504.57 437.25,505.50 437.25,505.50 437.74,504.94 438.23,504.44 438.72,504.04 439.21,503.79 439.70,503.70 440.19,503.79 440.68,504.04 441.17,504.44 441.66,504.94 442.15,505.50 442.15,505.50 442.64,504.94 443.13,504.44 443.62,504.04 444.11,503.79 444.60,503.70 445.09,503.79 445.58,504.04 446.07,504.44 446.56,504.94 447.05,505.50 447.05,505.50 447.54,504.94 448.03,504.44 448.52,504.04 449.01,503.79 449.50,503.70 449.99,503.79 450.48,504.04 450.97,504.44 451.46,504.94 451.95,505.50 451.95,505.50 452.44,504.94 452.93,504.44 453.42,504.04 453.91,503.79 454.40,503.70 454.89,503.79 455.38,504.04 455.87,504.44 456.36,504.94 456.85,505.50 456.85,505.50 457.34,504.94 457.83,504.44 458.32,504.04 458.81,503.79 459.30,503.70 459.79,503.79 460.28,504.04 460.77,504.44 461.26,504.94 461.75,505.50 461.75,505.50 462.24,504.57 462.73,503.74 463.22,503.07 463.71,502.65 464.20,502.50 464.69,502.65 465.18,503.07 465.67,503.74 466.16,504.57 466.65,505.50 466.65,505.50 467.14,504.57 467.63,503.74 468.12,503.07 468.61,502.65 469.10,502.50 469.59,502.65 470.08,503.07 470.57,503.74 471.06,504.57 471.55,505.50 471.55,505.50 472.04,504.57 472.53,503.74 473.02,503.07 473.51,502.65 474.00,502.50 474.49,502.65 474.98,503.07 475.47,503.74 475.96,504.57 476.45,505.50 476.45,505.50 476.94,504.94 477.43,504.44 477.92,504.04 478.41,503.79 478.90,503.70 479.39,503.79 479.88,504.04 480.37,504.44 480.86,504.94 481.35,505.50 481.35,505.50 481.84,504.94 482.33,504.44 482.82,504.04 483.31,503.79 483.80,503.70 484.29,503.79 484.78,504.04 485.27,504.44 485.76,504.94 486.25,505.50 486.25,505.50 486.74,504.94 487.23,504.44 487.72,504.04 488.21,503.79 488.70,503.70 489.19,503.79 489.68,504.04 490.17,504.44 490.66,504.94 491.15,505.50 491.15,505.50 491.64,504.94 492.13,504.44 492.62,504.04 493.11,503.79 493.60,503.70 494.10,503.79 494.60,504.04 495.10,504.44 495.60,504.94 496.10,505.50" fill="none" stroke="#d0d02c" stroke-width="0.85"/><rect x="3" y="508" width="495" height="6.5" fill="#1a0ea8"/><rect x="3" y="507.3" width="495" height="0.8" fill="#b8b8e0"/><text x="16" y="513.8" font-size="6.5" fill="#e0e0ff" text-anchor="middle">-5.0</text><text x="38.5" y="513.8" font-size="6.5" fill="#e0e0ff" text-anchor="middle">0.0</text><text x="149" y="513.8" font-size="6.5" fill="#e0e0ff" text-anchor="middle">5.0</text><text x="257" y="513.8" font-size="6.5" fill="#e0e0ff" text-anchor="middle">10.0</text><text x="368" y="513.8" font-size="6.5" fill="#e0e0ff" text-anchor="middle">15.0</text><text x="490" y="513.8" font-size="6.5" fill="#e0e0ff" text-anchor="middle">21</text><rect x="5" y="496" width="23" height="18" fill="#c8c8c8" opacity="0.5"/><path d="M12.5 507 L16.5 503.5 L20.5 507" stroke="#fff" stroke-width="1" fill="none"/><rect x="502" y="301" width="495" height="213" fill="#000ab8"/><rect x="510" y="302" width="470" height="205" filter="url(#nzD)"/><rect x="980" y="301.5" width="17" height="206" fill="#000"/><rect x="502" y="301.5" width="7" height="206" fill="#08087a"/><rect x="508.5" y="301.5" width="1.5" height="206" fill="#a0a4f8"/><rect x="506.5" y="313.5" width="2" height="1" fill="#b0b4ff"/><rect x="506.5" y="329.5" width="2" height="1" fill="#b0b4ff"/><rect x="506.5" y="345.5" width="2" height="1" fill="#b0b4ff"/><rect x="506.5" y="361.5" width="2" height="1" fill="#b0b4ff"/><rect x="506.5" y="377.5" width="2" height="1" fill="#b0b4ff"/><rect x="506.5" y="393.5" width="2" height="1" fill="#b0b4ff"/><rect x="506.5" y="409.5" width="2" height="1" fill="#b0b4ff"/><rect x="506.5" y="425.5" width="2" height="1" fill="#b0b4ff"/><rect x="506.5" y="441.5" width="2" height="1" fill="#b0b4ff"/><rect x="506.5" y="457.5" width="2" height="1" fill="#b0b4ff"/><rect x="506.5" y="473.5" width="2" height="1" fill="#b0b4ff"/><rect x="506.5" y="489.5" width="2" height="1" fill="#b0b4ff"/><text x="507" y="307" font-size="6.5" fill="#c8c8f8" transform="rotate(-90 507 307)" text-anchor="middle">1</text><text x="507" y="346" font-size="6.5" fill="#c8c8f8" transform="rotate(-90 507 346)" text-anchor="middle">40</text><text x="507" y="378" font-size="6.5" fill="#c8c8f8" transform="rotate(-90 507 378)" text-anchor="middle">60</text><text x="507" y="410" font-size="6.5" fill="#c8c8f8" transform="rotate(-90 507 410)" text-anchor="middle">80</text><text x="507" y="442" font-size="6.5" fill="#c8c8f8" transform="rotate(-90 507 442)" text-anchor="middle">100</text><text x="507" y="474" font-size="6.5" fill="#c8c8f8" transform="rotate(-90 507 474)" text-anchor="middle">120</text><text x="507" y="500" font-size="6.5" fill="#c8c8f8" transform="rotate(-90 507 500)" text-anchor="middle">14</text><rect x="616.8" y="301.5" width="1.2" height="206" fill="#e0dcf0"/><text x="621" y="311" font-size="6.5" fill="#7a7ab8" >89.08 mm</text><text x="513" y="494.5" font-size="6.5" fill="#7a7ab8" >13.67 mm</text><rect x="510" y="499.5" width="470" height="7" fill="#0c10b8" opacity="0.6"/><g filter="url(#bl1)"><rect x="527" y="501" width="80" height="2" fill="#2848ff" opacity="0.8"/></g><path d="M511 500 Q522 501 530 504 L537 506 H980 V507.5 H511 Z" fill="#70e0f0" opacity="0.8"/><path d="M511 501 Q520 502 528 505 L530 507.5 H511 Z" fill="#b8e048"/><g filter="url(#bl1)"><rect x="580" y="494" width="7" height="1.6" fill="#80a0ff"/><rect x="579" y="498" width="9" height="1.6" fill="#c0d0ff"/><rect x="580" y="501.5" width="7" height="1.4" fill="#6080ff"/></g><rect x="616.8" y="498" width="1.2" height="9.5" fill="#e0dcf0"/><g filter="url(#bl1)"><rect x="652.8" y="314" width="13" height="1.5" fill="#4060ff" opacity="0.75"/><rect x="652.8" y="317" width="13" height="1.5" fill="#4060ff" opacity="0.68"/><rect x="652.8" y="320" width="13" height="1.5" fill="#4060ff" opacity="0.60"/><rect x="652.8" y="323" width="13" height="1.5" fill="#4060ff" opacity="0.53"/><rect x="652.8" y="326" width="13" height="1.5" fill="#4060ff" opacity="0.45"/><rect x="652.8" y="329" width="13" height="1.5" fill="#4060ff" opacity="0.38"/><rect x="652.8" y="332" width="13" height="1.5" fill="#4060ff" opacity="0.30"/><rect x="652.8" y="335" width="13" height="1.5" fill="#4060ff" opacity="0.22"/><rect x="652.8" y="338" width="13" height="1.5" fill="#4060ff" opacity="0.15"/></g><g filter="url(#bl05)"><rect x="651.8" y="302" width="10" height="1.6" fill="#f0d8f0"/><rect x="651.8" y="305.5" width="11" height="1.6" fill="#d0d8ff"/><rect x="651.8" y="309" width="11" height="1.5" fill="#7080ff"/></g><rect x="658.8" y="300" width="14" height="13" fill="#8818c0" opacity="0.55"/><rect x="661.8" y="301.5" width="6.8" height="10" rx="1" fill="#b83008" stroke="#6a5010" stroke-width="0.6"/><text x="665.1999999999999" y="309.5" font-size="7" font-weight="bold" fill="#f8d860" text-anchor="middle">3</text><g filter="url(#bl1)"><rect x="690.6" y="314" width="13" height="1.5" fill="#4060ff" opacity="0.75"/><rect x="690.6" y="317" width="13" height="1.5" fill="#4060ff" opacity="0.68"/><rect x="690.6" y="320" width="13" height="1.5" fill="#4060ff" opacity="0.60"/><rect x="690.6" y="323" width="13" height="1.5" fill="#4060ff" opacity="0.53"/><rect x="690.6" y="326" width="13" height="1.5" fill="#4060ff" opacity="0.45"/><rect x="690.6" y="329" width="13" height="1.5" fill="#4060ff" opacity="0.38"/></g><g filter="url(#bl05)"><rect x="689.6" y="302" width="10" height="1.6" fill="#f0d8f0"/><rect x="689.6" y="305.5" width="11" height="1.6" fill="#d0d8ff"/><rect x="689.6" y="309" width="11" height="1.5" fill="#7080ff"/></g><rect x="696.6" y="300" width="14" height="13" fill="#8818c0" opacity="0.55"/><rect x="699.6" y="301.5" width="6.8" height="10" rx="1" fill="#b83008" stroke="#6a5010" stroke-width="0.6"/><text x="703.0" y="309.5" font-size="7" font-weight="bold" fill="#f8d860" text-anchor="middle">4</text><rect x="617" y="378" width="14" height="14" fill="#8020a0" opacity="0.5"/><rect x="621" y="382" width="7" height="9" rx="1" fill="#b03008" stroke="#604010" stroke-width="0.6"/><text x="624.5" y="389.5" font-size="7" font-weight="bold" fill="#f8d860" text-anchor="middle">1</text><rect x="613" y="392" width="10" height="5" fill="#904040" opacity="0.8"/><rect x="615" y="397" width="6" height="5" fill="#50a0ff" opacity="0.7"/><rect x="502" y="507.5" width="495" height="7" fill="#1a7a34"/><rect x="510" y="498.3" width="487" height="1.2" fill="#c8b4c0"/><text x="626" y="513.5" font-size="6.5" fill="#d8f0d8" text-anchor="middle">100</text><text x="746" y="513.5" font-size="6.5" fill="#d8f0d8" text-anchor="middle">200</text><text x="868" y="513.5" font-size="6.5" fill="#d8f0d8" text-anchor="middle">300</text><text x="990" y="513.5" font-size="6.5" fill="#d8f0d8" text-anchor="middle">400</text><rect x="502" y="513.3" width="495" height="1.2" fill="#a8a828"/><rect x="504" y="496" width="23" height="18" fill="#b8b8b8" opacity="0.6"/><path d="M511.5 507 L515.5 503.5 L519.5 507" stroke="#fff" stroke-width="1" fill="none"/><rect x="497.6" y="82" width="4.4" height="436" fill="#f6eecc"/><rect x="498.6" y="82" width="2" height="436" fill="#fbf6e6"/><rect x="0" y="296.5" width="1000" height="4.5" fill="#f6eecc"/><rect x="0" y="297.5" width="1000" height="2.5" fill="#fbf6ea"/><rect x="2" y="296.2" width="996" height="1.1" fill="#e0d050"/><rect x="500.3" y="301" width="1.4" height="214" fill="#e8dc70"/><rect x="2" y="81.8" width="997" height="1.8" fill="#dcd04c"/><rect x="2" y="82" width="1.2" height="215" fill="#e4d878"/><rect x="997" y="82" width="1.5" height="436" fill="#e4d878"/><rect x="0" y="514.5" width="1000" height="3.5" fill="#f4f2ea"/></svg>
<div class="a" style="left:0;top:518px;width:1000px;height:44px;background:#54585a"></div>
<div class="a" style="left:11px;top:525px;width:64px;height:27px;border-radius:3px;background:linear-gradient(#505050,#2c2c2c);box-shadow:0 0 0 1px #3a3d3f"></div>
<div class="a" style="left:21.5px;top:533.8px;font-size:8.4px;font-weight:bold;color:#fff;line-height:11px;white-space:nowrap">Analysis</div>
<svg class="a" style="left:58px;top:536px" width="8" height="5"><path d="M1 4 L4 1 L7 4" stroke="#909090" stroke-width="1.1" fill="none"/></svg>
<div class="a" style="left:0;top:560.8px;width:1000px;height:1.2px;background:#2c2e30"></div>
<div class="a" style="left:25px;top:560.8px;width:179px;height:1.2px;background:#e0e0e0"></div>
<div class="a" style="left:459px;top:560.8px;width:26px;height:1.2px;background:#6a6a6a"></div>
<div class="a" style="left:4.5px;top:554px;font-size:6.25px;font-weight:bold;color:#fff;line-height:9px;white-space:nowrap">Capture v3.1.2 b12 - video-matryx.rt [2020/03/16 - 13:42]</div>
<div class="a bb" style="left:802px;top:525.5px;width:31px;height:26.5px"></div>
<div class="a bb" style="left:840px;top:525.5px;width:31px;height:26.5px"></div>
<div class="a bb" style="left:877.5px;top:525.5px;width:31px;height:26.5px"></div>
<div class="a bb" style="left:915px;top:525.5px;width:31px;height:26.5px"></div>
<svg class="a" style="left:0;top:0" width="1000" height="562"><g fill="none" stroke="#6a6a6a" stroke-width="1.5"><rect x="811.5" y="533.3" width="13" height="11" rx="0.8"/><path d="M811.5 540.2 H824.5 M820 533.3 V540.2"/><rect x="850.2" y="532.5" width="10.6" height="13.3"/></g><path d="M852.5 535.5 H858.5 M852.5 537.5 H858.5 M852.5 539.5 H857 M852.5 541.5 H858.5" stroke="#9a9a9a" stroke-width="1"/><rect x="853" y="530.8" width="5" height="3" rx="0.6" fill="#6a6a6a"/><path d="M887 535 H889.3 L890.3 533.3 H895.2 L896.2 535 H899 V543.2 H887 Z" fill="#6a6a6a"/><circle cx="893" cy="539" r="2.6" fill="#e6e6e0"/><circle cx="893" cy="539" r="1.6" fill="#6a6a6a"/><path d="M925.2 532.5 H933.5 L935.8 534.8 V544.8 H925.2 Z" fill="#6a6a6a"/><rect x="927.3" y="532.5" width="5.6" height="4" fill="#e2e2dc"/><rect x="931.2" y="533" width="1.2" height="2.8" fill="#6a6a6a"/><rect x="927" y="539.5" width="7" height="4" fill="#e2e2dc"/></svg>
<div class="a" style="left:952px;top:526px;width:40px;height:25px;border-radius:2px;background:linear-gradient(#3a3a3a,#242424)"></div>
<div class="a" style="left:963px;top:533px;font-size:10px;font-weight:bold;color:#fff;line-height:11px;white-space:nowrap">End</div>
</body></html>
